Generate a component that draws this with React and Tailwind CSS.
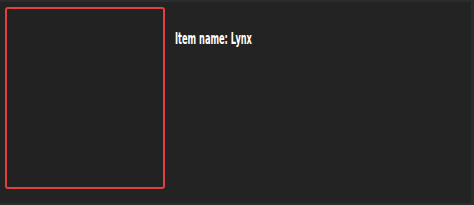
export default function App() {
  return (
    <div className="w-[474px] h-[205px] bg-[#232323] border-t-2 border-b-2 border-r-[3px] border-[#2c2c2c] flex items-start pl-[5px] pt-[5px]">
      <div className="w-[160px] h-[182px] shrink-0 rounded-[3px] border-2 border-[#e0413f] bg-[#222222]" />
      <div
        className="ml-[10px] mt-[25px] text-[15px] leading-none font-bold text-white whitespace-nowrap origin-left scale-x-[0.61]"
        style={{ fontFamily: '"DejaVu Sans Condensed", "DejaVu Sans", sans-serif' }}
      >
        Item name: Lynx
      </div>
    </div>
  );
}
